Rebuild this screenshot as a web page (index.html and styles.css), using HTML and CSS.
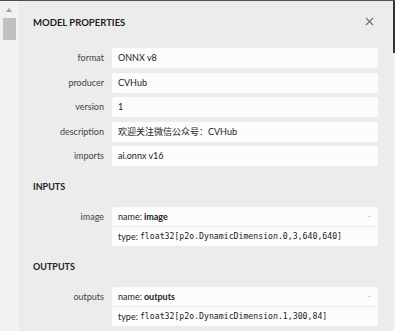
FILE: index.html
```html
<!DOCTYPE html>
<html lang="en">
  <head>
    <meta charset="UTF-8" />
    <meta name="viewport" content="width=device-width, initial-scale=1.0" />
    <title>Model Properties</title>
    <link rel="stylesheet" href="styles.css">
  </head>
  <body>
    <div class="frame">
      <div class="scrollbar">
        <span class="arrow"></span>
        <span class="thumb"></span>
      </div>
      <div class="panel">
        <header class="panel-header">
          <span class="title">MODEL PROPERTIES</span>
          <svg class="close" width="9" height="9" viewBox="0 0 9 9">
            <path d="M1 1 L8 8 M8 1 L1 8" stroke="#6a6f78" stroke-width="1.1" fill="none" />
          </svg>
        </header>
        <div class="props">
          <div class="row"><div class="label">format</div><div class="value">ONNX v8</div></div>
          <div class="row"><div class="label">producer</div><div class="value">CVHub</div></div>
          <div class="row"><div class="label">version</div><div class="value">1</div></div>
          <div class="row"><div class="label">description</div><div class="value">欢迎关注微信公众号：CVHub</div></div>
          <div class="row"><div class="label">imports</div><div class="value">ai.onnx v16</div></div>
        </div>
        <div class="section">INPUTS</div>
        <div class="row">
          <div class="label">image</div>
          <div class="value multi">
            <div class="line">name: <b>image</b><span class="toggle">-</span></div>
            <div class="line">type: <code>float32[p2o.DynamicDimension.0,3,640,640]</code></div>
          </div>
        </div>
        <div class="section">OUTPUTS</div>
        <div class="row">
          <div class="label">outputs</div>
          <div class="value multi">
            <div class="line">name: <b>outputs</b><span class="toggle">-</span></div>
            <div class="line">type: <code>float32[p2o.DynamicDimension.1,300,84]</code></div>
          </div>
        </div>
      </div>
      <div class="edge"><span class="dark"></span></div>
    </div>
  </body>
</html>
```

FILE: styles.css
```css
html,
body {
  margin: 0;
  padding: 0;
}
body {
  width: 395px;
  height: 331px;
  overflow: hidden;
  background-color: #f4f4f4;
  font-family: Lato, "Noto Sans CJK SC", sans-serif;
  font-size: 9px;
  color: #222;
}
.frame {
  display: flex;
  height: 330px;
  border-top: 1px solid #505050;
}
.scrollbar {
  width: 17px;
  background-color: #f1f1f1;
  border-right: 1px solid #f8f8f8;
  display: flex;
  flex-direction: column;
  align-items: center;
}
.arrow {
  margin-top: 7px;
  width: 0;
  height: 0;
  border-left: 3.5px solid transparent;
  border-right: 3.5px solid transparent;
  border-bottom: 4px solid #a3a3a3;
}
.thumb {
  margin-top: 6px;
  margin-left: 2px;
  width: 13px;
  height: 22px;
  background-color: #c1c1c1;
}
.panel {
  flex: 1;
  background-color: #ececec;
  padding: 0 15px;
  overflow: hidden;
}
.panel-header {
  height: 35px;
  padding-top: 12px;
  display: flex;
  justify-content: space-between;
}
.title {
  font-size: 9.5px;
  font-weight: bold;
  line-height: 20px;
  color: #222;
}
.close {
  margin-top: 4px;
  margin-right: 4px;
}
.row {
  display: flex;
  gap: 8px;
  margin-bottom: 4.5px;
}
.label {
  width: 71px;
  flex-shrink: 0;
  text-align: right;
  line-height: 20px;
  color: #444;
}
.value {
  flex: 1;
  background-color: #fcfcfc;
  border-radius: 2px;
  padding: 0 6px;
  line-height: 20px;
  white-space: nowrap;
}
.multi {
  padding: 0;
}
.line {
  display: flex;
  padding: 0 6px;
  line-height: 19px;
}
.line:first-child {
  border-bottom: 1px solid #ebebeb;
}
.line b {
  margin-left: 2px;
}
.line code {
  margin-left: 2px;
  font-family: "DejaVu Sans Mono", monospace;
  font-size: 8.2px;
}
.toggle {
  margin-left: auto;
  margin-right: 1px;
  color: #999;
  font-size: 8px;
}
.section {
  margin: 10px 0;
  line-height: 21px;
  font-weight: bold;
  color: #222;
}
.edge {
  width: 2px;
  background-color: #f4f4f4;
}
.dark {
  display: block;
  height: 52px;
  background-color: #333;
}
```
